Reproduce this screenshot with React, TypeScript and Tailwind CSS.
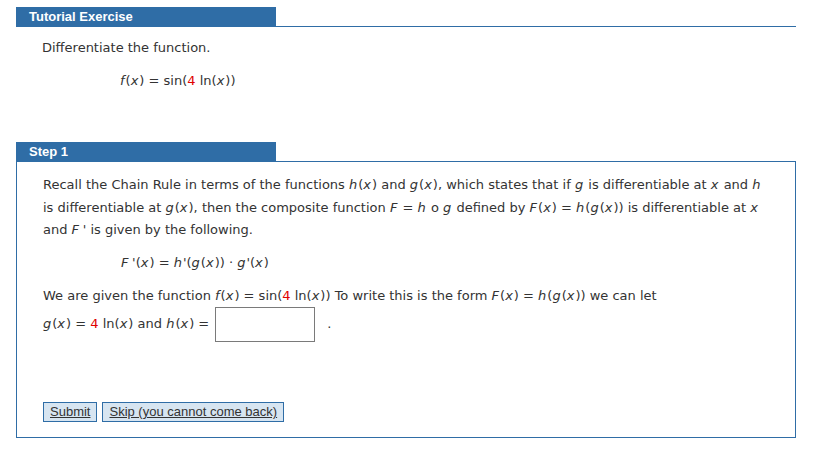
const blue = 'bg-[#2f6da6]';

function V({ children }: { children: React.ReactNode }) {
  return <i className="italic pr-[1px]">{children}</i>;
}

function Red({ children }: { children: React.ReactNode }) {
  return <span className="text-[#e00000]">{children}</span>;
}

export default function App() {
  return (
    <div className="w-[825px] h-[450px] bg-white text-[#333] text-[13px] font-['DejaVu_Sans',Verdana,sans-serif] pt-[7px] pl-4">
      {/* Tutorial Exercise */}
      <div className="w-[780px]">
        <div className="flex items-end">
          <div className={`${blue} w-[260px] h-[20px] pl-[13px] text-white font-bold text-[13px] leading-[20px] font-['Liberation_Sans',Arial,sans-serif]`}>
            Tutorial Exercise
          </div>
          <div className="flex-1 border-b border-[#2f6da6]" />
        </div>
        <div className="pl-[26px] pt-[12px] leading-[18px]">
          <p>Differentiate the function.</p>
          <p className="pl-[78px] mt-[15px]">
            <V>f</V>(<V>x</V>) = sin(<Red>4</Red> ln(<V>x</V>))
          </p>
        </div>
      </div>

      {/* Step 1 */}
      <div className="w-[780px] mt-[52px]">
        <div className={`${blue} w-[260px] h-[19px] pl-[13px] text-white font-bold text-[13px] leading-[19px] font-['Liberation_Sans',Arial,sans-serif]`}>
          Step 1
        </div>
        <div className="border border-[#2f6da6] h-[277px] pl-[26px] pr-4 pt-[12px]">
          <p className="leading-[22.5px] w-[726px]">
            Recall the Chain Rule in terms of the functions <V>h</V>(<V>x</V>) and <V>g</V>(<V>x</V>), which states that if <V>g</V> is differentiable at <V>x</V> and <V>h</V> is differentiable at <V>g</V>(<V>x</V>), then the composite function <V>F</V> = <V>h</V> o <V>g</V> defined by <V>F</V>(<V>x</V>) = <V>h</V>(<V>g</V>(<V>x</V>)) is differentiable at <V>x</V> and <V>F</V>&thinsp;' is given by the following.
          </p>
          <p className="pl-[78px] mt-[12px] leading-[18px]">
            <V>F</V>&thinsp;'(<V>x</V>) = <V>h</V>'(<V>g</V>(<V>x</V>)) · <V>g</V>'(<V>x</V>)
          </p>
          <p className="mt-[15px] leading-[18px]">
            We are given the function <V>f</V>(<V>x</V>) = sin(<Red>4</Red> ln(<V>x</V>)) To write this is the form <V>F</V>(<V>x</V>) = <V>h</V>(<V>g</V>(<V>x</V>)) we can let
          </p>
          <div className="flex items-center mt-[2px]">
            <span>
              <V>g</V>(<V>x</V>) = <Red>4</Red> ln(<V>x</V>) and <V>h</V>(<V>x</V>) =
            </span>
            <input className="ml-[6px] w-[100px] h-[35px] border border-[#7a7a7a] bg-white outline-none" />
            <span className="ml-[12px]">.</span>
          </div>
          <div className="flex gap-[5px] mt-[60px] font-['Liberation_Sans',Arial,sans-serif] text-[13px] text-[#333]">
            <button className="h-[20px] px-[6px] bg-[#d7e5f1] border border-[#2f6da6] underline leading-[17px]">Submit</button>
            <button className="h-[20px] px-[6px] bg-[#d7e5f1] border border-[#2f6da6] underline leading-[17px]">Skip (you cannot come back)</button>
          </div>
        </div>
      </div>
    </div>
  );
}
